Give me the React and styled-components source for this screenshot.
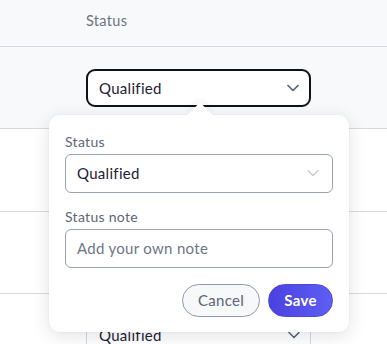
import React from "react";
import styled, { createGlobalStyle } from "styled-components";

const Global = createGlobalStyle`
  html, body { margin: 0; padding: 0; background: #ffffff; }
  body { font-family: Lato, "Open Sans", sans-serif; -webkit-font-smoothing: antialiased; letter-spacing: 0.3px; }
  * { box-sizing: border-box; }
`;

const Table = styled.div`
  width: 387px;
  height: 344px;
  overflow: hidden;
  display: flex;
  flex-direction: column;
`;

const HeaderRow = styled.div`
  flex: 0 0 47px;
  display: flex;
  align-items: center;
  padding-left: 86px;
  padding-bottom: 5px;
  background: #f8f9fb;
  border-bottom: 1px solid #d7dae2;
  color: #6b7385;
  font-size: 14.5px;
`;

const Row = styled.div`
  flex: 0 0 ${(p) => p.$h || 82}px;
  display: flex;
  align-items: center;
  padding-left: 86px;
  background: ${(p) => (p.$active ? "#f8f9fb" : "#ffffff")};
  border-bottom: 1px solid #d7dae2;
`;

const SelectWrap = styled.div`
  position: relative;
  width: 225px;
  height: 38px;
`;

const Select = styled.div`
  height: 100%;
  display: flex;
  align-items: center;
  justify-content: space-between;
  padding: 0 10px 0 ${(p) => (p.$focused ? 11 : 12)}px;
  border: ${(p) => (p.$focused ? "2px solid #111214" : "1px solid #d3d7df")};
  border-radius: 9px;
  background: #ffffff;
  color: #1d2133;
  font-size: 15px;
`;

const Chevron = ({ color, width = 1.6 }) => (
  <svg width="12" height="8" viewBox="0 0 12 8" fill="none">
    <polyline
      points="1,1.5 6,6.5 11,1.5"
      stroke={color}
      strokeWidth={width}
      strokeLinecap="round"
      strokeLinejoin="round"
    />
  </svg>
);

const Popover = styled.div`
  position: absolute;
  z-index: 5;
  top: 46px;
  left: -37px;
  width: 300px;
  padding: 18px 16px 15px;
  background: #ffffff;
  border-radius: 11px;
  box-shadow: 0 4px 18px rgba(30, 35, 60, 0.13), 0 0 3px rgba(30, 35, 60, 0.05);
  display: flex;
  flex-direction: column;
`;

const Arrow = styled.div`
  position: absolute;
  top: -9px;
  left: 142px;
  width: 18px;
  height: 18px;
  background: #ffffff;
  transform: rotate(45deg);
  box-shadow: -3px -3px 6px rgba(30, 35, 60, 0.05);
  border-radius: 2px 0 0 0;
`;

const Field = styled.div`
  display: flex;
  flex-direction: column;
  gap: 4px;
  margin-bottom: ${(p) => p.$mb || 0}px;
  position: relative;
`;

const Label = styled.label`
  color: #5d6679;
  font-size: 14px;
  line-height: 17px;
`;

const Control = styled.div`
  height: 39px;
  display: flex;
  align-items: center;
  justify-content: space-between;
  padding: 0 13px 0 11px;
  border: 1px solid #9aa1b1;
  border-radius: 6px;
  font-size: 15px;
  color: ${(p) => (p.$placeholder ? "#6e7587" : "#1d2133")};
`;

const Actions = styled.div`
  display: flex;
  justify-content: flex-end;
  gap: 8px;
  margin-top: 16px;
`;

const Button = styled.button`
  height: 33px;
  border-radius: 17px;
  font-family: inherit;
  letter-spacing: 0.3px;
  font-size: 15px;
  padding: 0;
  width: ${(p) => (p.$primary ? 65 : 78)}px;
  border: 1px solid ${(p) => (p.$primary ? "#4b44dd" : "#8f98aa")};
  background: ${(p) =>
    p.$primary ? "linear-gradient(90deg, #4a42df 0%, #5d5ef3 100%)" : "#f7f8fa"};
  color: ${(p) => (p.$primary ? "#ffffff" : "#5b6478")};
  font-weight: ${(p) => (p.$primary ? 700 : 400)};
`;

export default function App() {
  return (
    <>
      <Global />
      <Table>
        <HeaderRow>Status</HeaderRow>
        <Row $active>
          <SelectWrap>
            <Select $focused>
              Qualified
              <Chevron color="#5a6478" width={1.7} />
            </Select>
            <Popover>
              <Arrow />
              <Field $mb={15}>
                <Label>Status</Label>
                <Control>
                  Qualified
                  <Chevron color="#c5c9d1" width={1.1} />
                </Control>
              </Field>
              <Field>
                <Label>Status note</Label>
                <Control $placeholder>Add your own note</Control>
              </Field>
              <Actions>
                <Button>Cancel</Button>
                <Button $primary>Save</Button>
              </Actions>
            </Popover>
          </SelectWrap>
        </Row>
        <Row $h={83} />
        <Row />
        <Row>
          <SelectWrap>
            <Select>Qualified<Chevron color="#5a6478" /></Select>
          </SelectWrap>
        </Row>
      </Table>
    </>
  );
}
